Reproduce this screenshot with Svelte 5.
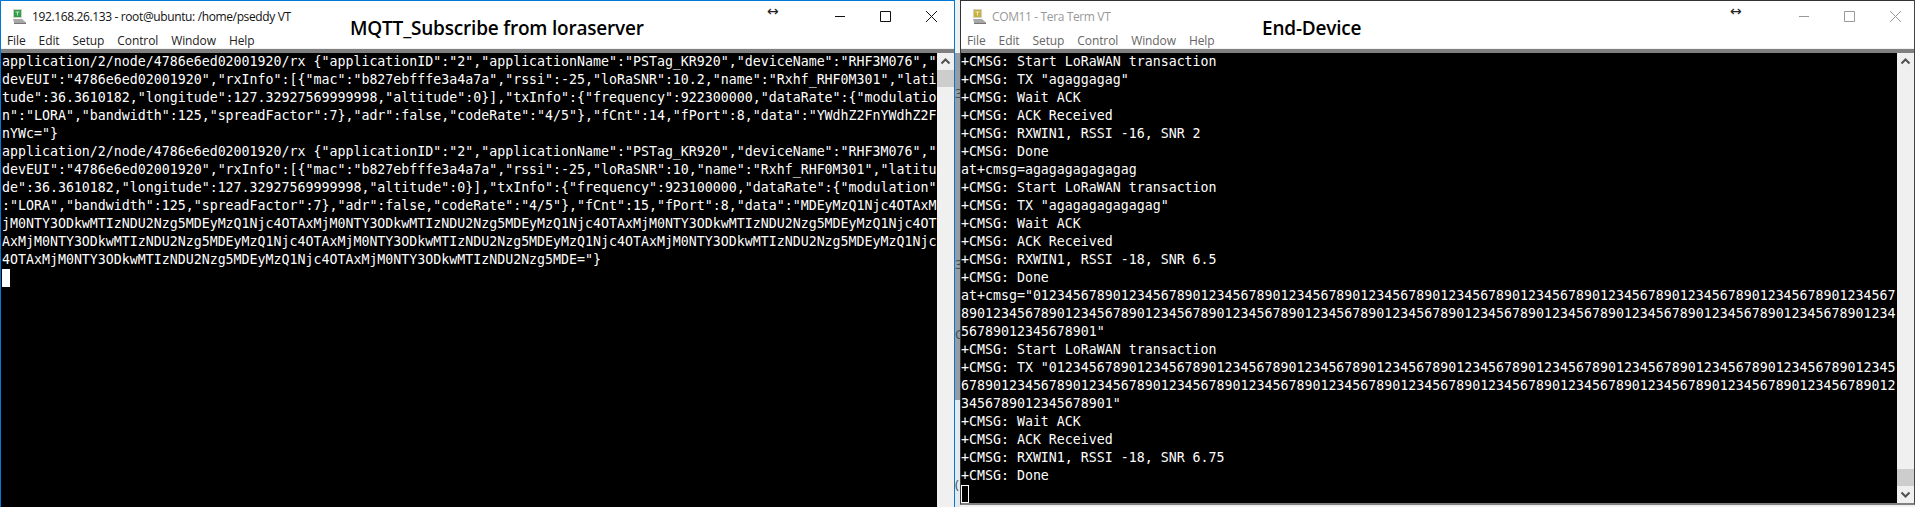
<script>
  const digits = '0123456789'.repeat(25).slice(0, 242);

  function mqtt(snr, freq, cnt, payload) {
    return 'application/2/node/4786e6ed02001920/rx {"applicationID":"2","applicationName":"PSTag_KR920","deviceName":"RHF3M076","devEUI":"4786e6ed02001920","rxInfo":[{"mac":"b827ebfffe3a4a7a","rssi":-25,"loRaSNR":' + snr + ',"name":"Rxhf_RHF0M301","latitude":36.3610182,"longitude":127.32927569999998,"altitude":0}],"txInfo":{"frequency":' + freq + ',"dataRate":{"modulation":"LORA","bandwidth":125,"spreadFactor":7},"adr":false,"codeRate":"4/5"},"fCnt":' + cnt + ',"fPort":8,"data":"' + btoa(payload) + '"}';
  }

  const left = [
    mqtt('10.2', 922300000, 14, 'agagagagagagag'),
    mqtt('10', 923100000, 15, digits)
  ];

  const right = [
    '+CMSG: Start LoRaWAN transaction',
    '+CMSG: TX "agaggagag"',
    '+CMSG: Wait ACK',
    '+CMSG: ACK Received',
    '+CMSG: RXWIN1, RSSI -16, SNR 2',
    '+CMSG: Done',
    'at+cmsg=agagagagagagag',
    '+CMSG: Start LoRaWAN transaction',
    '+CMSG: TX "agagagagagagag"',
    '+CMSG: Wait ACK',
    '+CMSG: ACK Received',
    '+CMSG: RXWIN1, RSSI -18, SNR 6.5',
    '+CMSG: Done',
    'at+cmsg="' + digits + '"',
    '+CMSG: Start LoRaWAN transaction',
    '+CMSG: TX "' + digits + '"',
    '+CMSG: Wait ACK',
    '+CMSG: ACK Received',
    '+CMSG: RXWIN1, RSSI -18, SNR 6.75',
    '+CMSG: Done'
  ];

  const menu = ['File', 'Edit', 'Setup', 'Control', 'Window', 'Help'];

  // bits of the window behind that show through between the two terminals
  const behind = [
    { top: 84, ch: '3' },
    { top: 255, ch: '3' },
    { top: 325, ch: 'C' },
    { top: 475, ch: '(' }
  ];
</script>

{#snippet vtIcon(face)}
  <svg class="app-icon" width="16" height="16" viewBox="0 0 16 16">
    <path d="M1 0h9v9H1z" fill="#d2d2c8" />
    <path d="M2 1h7v7H2z" fill={face} />
    <path d="M3.5 2.5h4v1H6v3H5v-3H3.5z" fill="#fff" opacity="0.7" />
    <path d="M1 10h9l4 3.5H2z" fill="#a8a8a8" />
    <path d="M2 13.5h12v1.5H2z" fill="#777" />
  </svg>
{/snippet}

{#snippet caption(inactive)}
  <div class="caption" class:inactive>
    <svg width="125" height="15" viewBox="0 0 125 15" fill="none" stroke="currentColor">
      <path d="M20 7.5h10" />
      <path d="M65.5 2.5h10v10h-10z" />
      <path d="M111 2l11 11M122 2l-11 11" />
    </svg>
  </div>
{/snippet}

{#snippet scrollbar(thumbBottom)}
  <div class="scrollbar" class:bottom={thumbBottom}>
    <svg class="arrow" width="17" height="17" viewBox="0 0 17 17" fill="none" stroke="#505050" stroke-width="2">
      <path d="M4.5 10.5l4-4 4 4" />
    </svg>
    <div class="track"><div class="thumb"></div></div>
    <svg class="arrow" width="17" height="17" viewBox="0 0 17 17" fill="none" stroke="#505050" stroke-width="2">
      <path d="M4.5 6.5l4 4 4-4" />
    </svg>
  </div>
{/snippet}

<div class="desktop">
  <section class="window active">
    <header class="titlebar">
      <div class="title-row">
        {@render vtIcon('#2f9e44')}
        <span class="title">192.168.26.133 - root@ubuntu: /home/pseddy VT</span>
        <span class="resize">↔</span>
        {@render caption(false)}
      </div>
      <nav class="menu">
        {#each menu as item}<span>{item}</span>{/each}
      </nav>
      <div class="note mqtt">MQTT_Subscribe from loraserver</div>
    </header>
    <div class="body">
      <div class="terminal">
        {#each left as line}<div class="line">{line}</div>{/each}
        <div class="cursor filled"></div>
      </div>
      {@render scrollbar(false)}
    </div>
  </section>

  <div class="gap">
    {#each behind as b}<span style="top: {b.top}px">{b.ch}</span>{/each}
  </div>

  <section class="window">
    <header class="titlebar">
      <div class="title-row">
        {@render vtIcon('#c9b23a')}
        <span class="title">COM11 - Tera Term VT</span>
        <span class="resize">↔</span>
        {@render caption(true)}
      </div>
      <nav class="menu">
        {#each menu as item}<span>{item}</span>{/each}
      </nav>
      <div class="note device">End-Device</div>
    </header>
    <div class="body">
      <div class="terminal">
        {#each right as line}<div class="line">{line}</div>{/each}
        <div class="cursor"></div>
      </div>
      {@render scrollbar(true)}
    </div>
  </section>
</div>

<style>
  :global(body) {
    margin: 0;
    background: #f0f0f0;
    overflow: hidden;
  }

  .desktop {
    display: grid;
    grid-template-columns: 955px 5px 955px;
    width: 1915px;
    height: 507px;
    overflow: hidden;
    font-family: "Open Sans", "Noto Sans", sans-serif;
  }

  .gap {
    position: relative;
    height: 507px;
    background: linear-gradient(#f0f0f0 0 53px, #969ca2 53px 400px, #e6e9ec 400px);
    overflow: hidden;
  }

  .gap span {
    position: absolute;
    left: 0;
    font-size: 13px;
    color: #3f4d4a;
  }

  .window {
    display: flex;
    flex-direction: column;
    height: 502px;
    border-top: 1px solid #333;
    border-left: 1px solid #333;
    border-right: 1px solid #444;
    border-bottom: 2px solid #808080;
    background: #fff;
  }

  .window.active {
    height: 530px;
    border-top-color: #0078d7;
    border-left-color: #0078d7;
    border-right-color: #0078d7;
    border-bottom: 0;
  }

  .titlebar {
    position: relative;
    flex: none;
    height: 48px;
    border-bottom: 4px solid #808080;
    box-shadow: inset 0 -1px 0 #f0f0f0;
  }

  .title-row {
    display: flex;
    align-items: center;
    height: 31px;
    padding-left: 11px;
  }

  .title {
    margin-left: 4px;
    font-size: 12px;
    letter-spacing: -0.37px;
    color: #111;
  }

  .window:not(.active) .title {
    color: #999;
  }

  .resize {
    position: absolute;
    top: 2px;
    font: 14px "DejaVu Sans", sans-serif;
    color: #222;
  }

  .active .resize {
    left: 766px;
  }

  .window:not(.active) .resize {
    left: 769px;
  }

  .caption {
    margin-left: auto;
    margin-right: 14px;
    height: 15px;
    color: #111;
  }

  .caption svg {
    display: block;
  }

  .caption.inactive {
    margin-right: 10px;
    color: #999;
  }

  .menu {
    display: flex;
    padding-left: 6px;
    gap: 13px;
    font-size: 12px;
    letter-spacing: -0.1px;
    color: #222;
  }

  .window:not(.active) .menu {
    color: #666;
  }

  .note {
    position: absolute;
    top: 14px;
    font-size: 19px;
    font-weight: 600;
    letter-spacing: -0.2px;
    color: #000;
  }

  .mqtt {
    left: 349px;
  }

  .device {
    left: 301px;
  }

  .body {
    flex: 1;
    display: flex;
    min-height: 0;
    background: #000;
  }

  .terminal {
    flex: 1;
    min-width: 0;
    overflow: hidden;
    font: 13.28px/18px "DejaVu Sans Mono", monospace;
    color: #fff;
    line-break: anywhere;
  }

  .active .terminal {
    padding-left: 1px;
  }

  .line {
    width: 936px;
    white-space: pre-wrap;
  }

  .cursor {
    box-sizing: border-box;
    width: 8px;
    height: 18px;
    border: 1px solid #fff;
  }

  .cursor.filled {
    background: #fff;
  }

  .scrollbar {
    flex: none;
    display: flex;
    flex-direction: column;
    width: 17px;
    background: #f0f0f0;
  }

  .arrow {
    flex: none;
  }

  .track {
    flex: 1;
    display: flex;
    flex-direction: column;
  }

  .bottom .track {
    justify-content: flex-end;
  }

  .thumb {
    height: 17px;
    background: #cdcdcd;
  }
</style>
